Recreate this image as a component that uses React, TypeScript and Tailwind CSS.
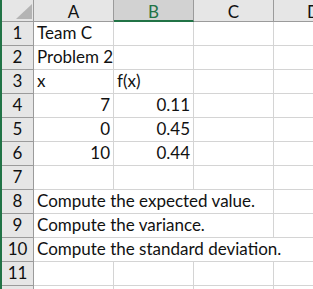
import React from "react";

const rows: { n: number; a?: string; aRight?: boolean; b?: string; bRight?: boolean; span?: boolean }[] = [
  { n: 1, a: "Team C" },
  { n: 2, a: "Problem 2" },
  { n: 3, a: "x", b: "f(x)" },
  { n: 4, a: "7", aRight: true, b: "0.11", bRight: true },
  { n: 5, a: "0", aRight: true, b: "0.45", bRight: true },
  { n: 6, a: "10", aRight: true, b: "0.44", bRight: true },
  { n: 7 },
  { n: 8, a: "Compute the expected value.", span: true },
  { n: 9, a: "Compute the variance.", span: true },
  { n: 10, a: "Compute the standard deviation.", span: true },
  { n: 11 },
  { n: 12 },
];

export default function App() {
  return (
    <div
      className="w-[313px] h-[289px] overflow-hidden bg-white text-[#111]"
      style={{ fontFamily: "Lato, 'Liberation Sans', sans-serif" }}
    >
      <div className="flex border-l-2 border-[#217346] w-[400px]">
        <div className="flex flex-col">
          <div className="relative w-[32px] h-[22px] bg-[#e6e6e6] border-b border-r border-[#9b9b9b]">
            <svg className="absolute left-[14px] top-[4px]" width="16" height="15" viewBox="0 0 16 15">
              <polygon points="16,0 16,15 0,15" fill="#b4b4b4" />
            </svg>
          </div>
          {rows.map((r) => (
            <div
              key={r.n}
              className="w-[32px] h-[24px] bg-[#e6e6e6] border-b border-r border-[#9b9b9b] flex items-end justify-center pb-[4px] text-[17px] leading-none"
            >
              {r.n <= 11 ? r.n : ""}
            </div>
          ))}
        </div>
        <div className="flex flex-col">
          <div className="flex h-[22px]">
            <div className="w-[80px] h-[22px] bg-[#e6e6e6] border-b border-r border-[#9b9b9b] flex items-center justify-center text-[17px] leading-none pt-[1px]">
              A
            </div>
            <div className="w-[80px] h-[22px] bg-[#d2d2d2] border-b-2 border-b-[#217346] border-r border-r-[#9b9b9b] flex items-center justify-center text-[17px] leading-none text-[#217346] pt-[2px]">
              B
            </div>
            <div className="w-[80px] h-[22px] bg-[#e6e6e6] border-b border-r border-[#9b9b9b] flex items-center justify-center text-[17px] leading-none pt-[1px]">
              C
            </div>
            <div className="w-[80px] h-[22px] bg-[#e6e6e6] border-b border-r border-[#9b9b9b] flex items-center justify-center text-[17px] leading-none pt-[1px]">
              D
            </div>
          </div>
          {rows.map((r) => (
            <div key={r.n} className="flex h-[24px] text-[17px] leading-none">
              <div
                className={`relative w-[80px] h-[24px] border-b border-[#d4d4d4] flex items-end pb-[4px] ${
                  r.span ? "" : "border-r"
                } ${r.aRight ? "justify-end pr-[3px]" : "pl-[3px]"}`}
              >
                <span className="whitespace-nowrap">{r.a}</span>
              </div>
              <div
                className={`w-[80px] h-[24px] border-b border-[#d4d4d4] flex items-end pb-[4px] ${
                  r.span ? "" : "border-r"
                } ${r.bRight ? "justify-end pr-[3px]" : "pl-[3px]"}`}
              >
                <span className="whitespace-nowrap">{r.b}</span>
              </div>
              <div
                className={`w-[80px] h-[24px] border-b border-[#d4d4d4] flex items-end pb-[4px] ${
                  r.span && r.n === 10 ? "" : "border-r"
                }`}
              />
              <div className="w-[80px] h-[24px] border-b border-r border-[#d4d4d4]" />
            </div>
          ))}
        </div>
      </div>
    </div>
  );
}
